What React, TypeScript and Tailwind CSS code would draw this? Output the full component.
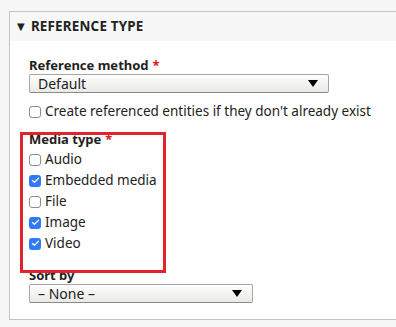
import { Check } from "lucide-react";

function Box({ checked }: { checked?: boolean }) {
  if (checked) {
    return (
      <span className="flex h-[12px] w-[12px] shrink-0 items-center justify-center rounded-[3px] bg-[#2f7bf5]">
        <Check size={9} strokeWidth={3.5} className="text-white" />
      </span>
    );
  }
  return (
    <span className="h-[12px] w-[12px] shrink-0 rounded-[3px] border border-[#8e8e8e] bg-white" />
  );
}

function Option({ label, checked }: { label: string; checked?: boolean }) {
  return (
    <div className="flex h-[21px] items-center gap-[4px]">
      <Box checked={checked} />
      <span className="leading-none">{label}</span>
    </div>
  );
}

function Select({ value, width }: { value: string; width: string }) {
  return (
    <div
      className={`flex h-[19px] items-center justify-between rounded-[2px] border border-[#a6a6a6] border-b-[#8a8a8a] bg-gradient-to-b from-[#fefefe] to-[#e9e9e4] pl-[8px] pr-[10px] text-[14px] ${width}`}
    >
      <span className="leading-none">{value}</span>
      <span className="h-0 w-0 border-x-[5px] border-t-[7px] border-x-transparent border-t-black" />
    </div>
  );
}

function Required() {
  return <span className="ml-[4px] text-[#e2151b]">*</span>;
}

export default function App() {
  return (
    <div
      className="h-[327px] w-[396px] overflow-hidden bg-[#f7f7f7] pt-[11px] pl-[9px] text-[13.5px] text-[#222]"
      style={{ fontFamily: '"Noto Sans", "DejaVu Sans", sans-serif' }}
    >
      <div className="relative h-[309px] w-[420px] border border-[#c4c4c4] bg-white">
        <div className="flex h-[29px] items-center gap-[6px] bg-[#f7f7f7] pl-[7px] text-[13.4px] font-bold tracking-[0.2px] text-[#222]">
          <span className="text-[10px]">▼</span>
          <span>REFERENCE TYPE</span>
        </div>

        <div className="pl-[19px]">
          <div className="mt-[16px] h-[17px] text-[13px] font-bold leading-[17px]">
            Reference method
            <Required />
          </div>
          <Select value="Default" width="w-[300px]" />

          <div className="mt-[11px] flex h-[16px] items-center gap-[4px]">
            <Box />
            <span className="leading-none">
              Create referenced entities if they don&apos;t already exist
            </span>
          </div>

          <div className="mt-[11px] h-[18px] text-[13px] font-bold leading-[16px]">
            Media type
            <Required />
          </div>
          <div>
            <Option label="Audio" />
            <Option label="Embedded media" checked />
            <Option label="File" />
            <Option label="Image" checked />
            <Option label="Video" checked />
          </div>

          <div className="mt-[13px] h-[17px] text-[13px] font-bold leading-[17px]">Sort by</div>
          <Select value="– None –" width="w-[224px]" />
        </div>

        <div className="pointer-events-none absolute left-[10px] top-[120px] h-[141px] w-[146px] border-[3px] border-[#e3222b]" />
      </div>
    </div>
  );
}
